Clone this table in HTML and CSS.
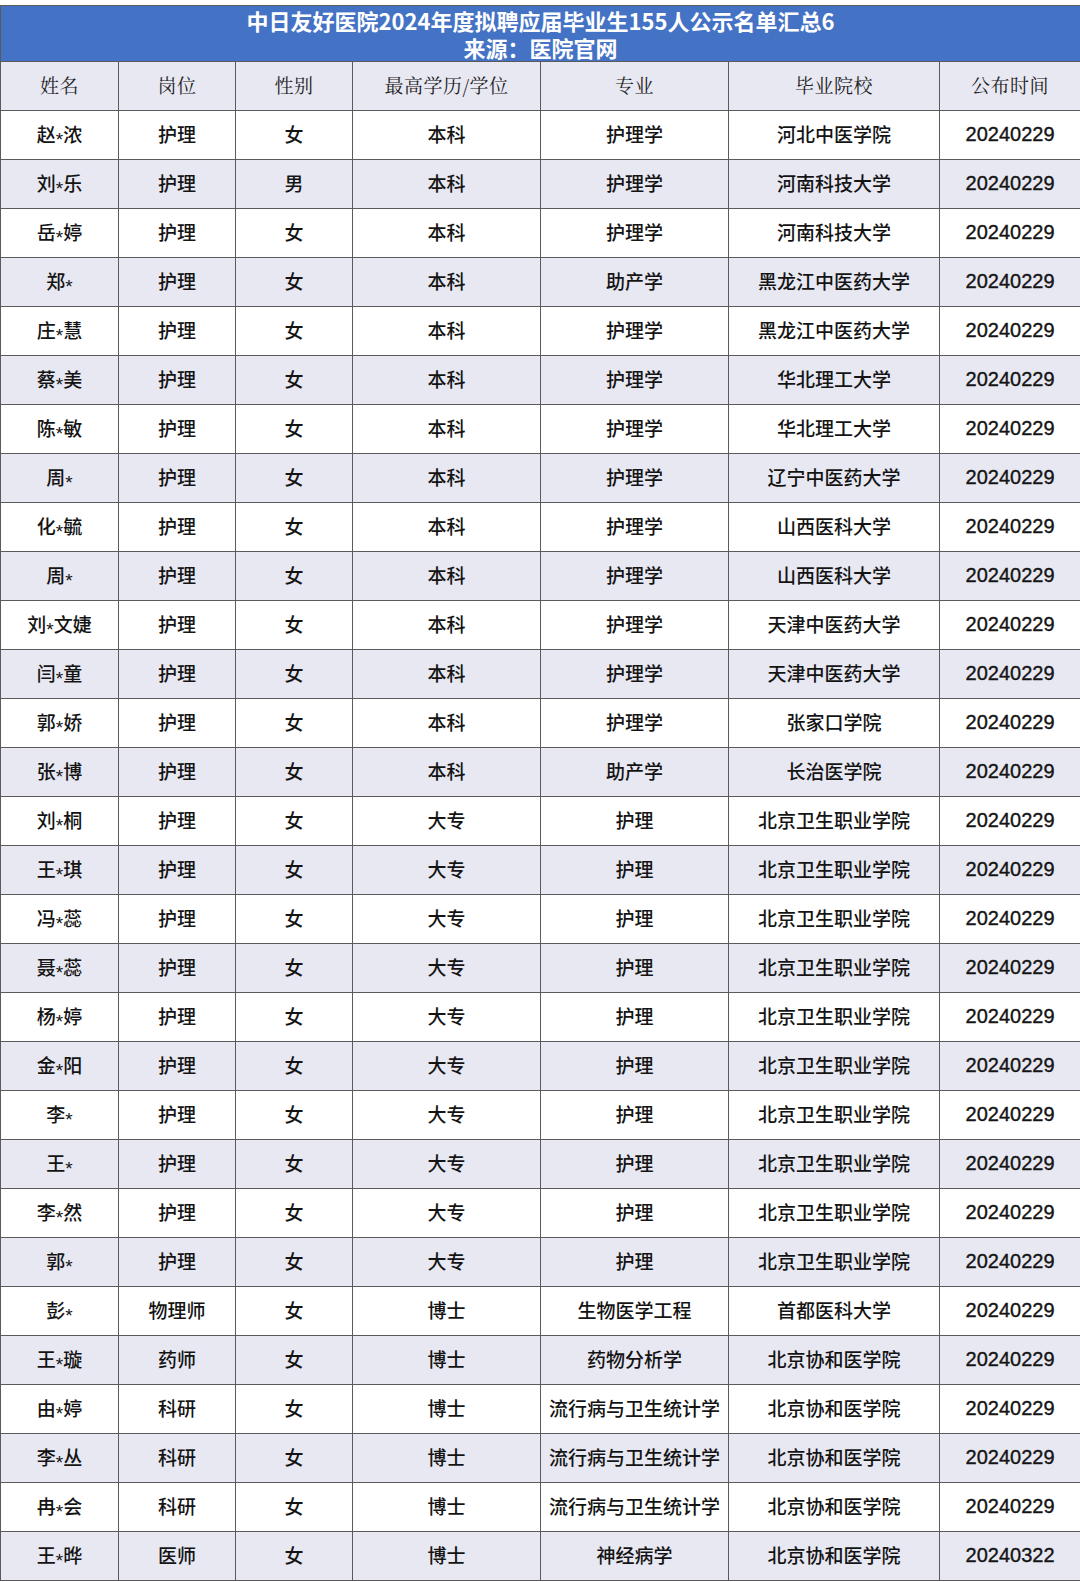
FILE: index.html
```html
<!DOCTYPE html>
<html lang="zh-CN">
<head>
<meta charset="utf-8">
<title>中日友好医院2024年度拟聘应届毕业生公示名单</title>
<link rel="stylesheet" href="styles.css">
</head>
<body>
<table class="list">
<colgroup>
<col class="c-name"><col class="c-post"><col class="c-sex"><col class="c-edu"><col class="c-major"><col class="c-school"><col class="c-date">
</colgroup>
<thead>
<tr class="title-row"><th colspan="7" class="title"><div class="title-line">中日友好医院2024年度拟聘应届毕业生155人公示名单汇总6</div><div class="title-line">来源：医院官网</div></th></tr>
<tr class="head-row"><th>姓名</th><th>岗位</th><th>性别</th><th>最高学历/学位</th><th>专业</th><th>毕业院校</th><th>公布时间</th></tr>
</thead>
<tbody>
<tr><td>赵<i>*</i>浓</td><td>护理</td><td>女</td><td>本科</td><td>护理学</td><td>河北中医学院</td><td class="date">20240229</td></tr>
<tr><td>刘<i>*</i>乐</td><td>护理</td><td>男</td><td>本科</td><td>护理学</td><td>河南科技大学</td><td class="date">20240229</td></tr>
<tr><td>岳<i>*</i>婷</td><td>护理</td><td>女</td><td>本科</td><td>护理学</td><td>河南科技大学</td><td class="date">20240229</td></tr>
<tr><td>郑<i>*</i></td><td>护理</td><td>女</td><td>本科</td><td>助产学</td><td>黑龙江中医药大学</td><td class="date">20240229</td></tr>
<tr><td>庄<i>*</i>慧</td><td>护理</td><td>女</td><td>本科</td><td>护理学</td><td>黑龙江中医药大学</td><td class="date">20240229</td></tr>
<tr><td>蔡<i>*</i>美</td><td>护理</td><td>女</td><td>本科</td><td>护理学</td><td>华北理工大学</td><td class="date">20240229</td></tr>
<tr><td>陈<i>*</i>敏</td><td>护理</td><td>女</td><td>本科</td><td>护理学</td><td>华北理工大学</td><td class="date">20240229</td></tr>
<tr><td>周<i>*</i></td><td>护理</td><td>女</td><td>本科</td><td>护理学</td><td>辽宁中医药大学</td><td class="date">20240229</td></tr>
<tr><td>化<i>*</i>毓</td><td>护理</td><td>女</td><td>本科</td><td>护理学</td><td>山西医科大学</td><td class="date">20240229</td></tr>
<tr><td>周<i>*</i></td><td>护理</td><td>女</td><td>本科</td><td>护理学</td><td>山西医科大学</td><td class="date">20240229</td></tr>
<tr><td>刘<i>*</i>文婕</td><td>护理</td><td>女</td><td>本科</td><td>护理学</td><td>天津中医药大学</td><td class="date">20240229</td></tr>
<tr><td>闫<i>*</i>童</td><td>护理</td><td>女</td><td>本科</td><td>护理学</td><td>天津中医药大学</td><td class="date">20240229</td></tr>
<tr><td>郭<i>*</i>娇</td><td>护理</td><td>女</td><td>本科</td><td>护理学</td><td>张家口学院</td><td class="date">20240229</td></tr>
<tr><td>张<i>*</i>博</td><td>护理</td><td>女</td><td>本科</td><td>助产学</td><td>长治医学院</td><td class="date">20240229</td></tr>
<tr><td>刘<i>*</i>桐</td><td>护理</td><td>女</td><td>大专</td><td>护理</td><td>北京卫生职业学院</td><td class="date">20240229</td></tr>
<tr><td>王<i>*</i>琪</td><td>护理</td><td>女</td><td>大专</td><td>护理</td><td>北京卫生职业学院</td><td class="date">20240229</td></tr>
<tr><td>冯<i>*</i>蕊</td><td>护理</td><td>女</td><td>大专</td><td>护理</td><td>北京卫生职业学院</td><td class="date">20240229</td></tr>
<tr><td>聂<i>*</i>蕊</td><td>护理</td><td>女</td><td>大专</td><td>护理</td><td>北京卫生职业学院</td><td class="date">20240229</td></tr>
<tr><td>杨<i>*</i>婷</td><td>护理</td><td>女</td><td>大专</td><td>护理</td><td>北京卫生职业学院</td><td class="date">20240229</td></tr>
<tr><td>金<i>*</i>阳</td><td>护理</td><td>女</td><td>大专</td><td>护理</td><td>北京卫生职业学院</td><td class="date">20240229</td></tr>
<tr><td>李<i>*</i></td><td>护理</td><td>女</td><td>大专</td><td>护理</td><td>北京卫生职业学院</td><td class="date">20240229</td></tr>
<tr><td>王<i>*</i></td><td>护理</td><td>女</td><td>大专</td><td>护理</td><td>北京卫生职业学院</td><td class="date">20240229</td></tr>
<tr><td>李<i>*</i>然</td><td>护理</td><td>女</td><td>大专</td><td>护理</td><td>北京卫生职业学院</td><td class="date">20240229</td></tr>
<tr><td>郭<i>*</i></td><td>护理</td><td>女</td><td>大专</td><td>护理</td><td>北京卫生职业学院</td><td class="date">20240229</td></tr>
<tr><td>彭<i>*</i></td><td>物理师</td><td>女</td><td>博士</td><td>生物医学工程</td><td>首都医科大学</td><td class="date">20240229</td></tr>
<tr><td>王<i>*</i>璇</td><td>药师</td><td>女</td><td>博士</td><td>药物分析学</td><td>北京协和医学院</td><td class="date">20240229</td></tr>
<tr><td>由<i>*</i>婷</td><td>科研</td><td>女</td><td>博士</td><td>流行病与卫生统计学</td><td>北京协和医学院</td><td class="date">20240229</td></tr>
<tr><td>李<i>*</i>丛</td><td>科研</td><td>女</td><td>博士</td><td>流行病与卫生统计学</td><td>北京协和医学院</td><td class="date">20240229</td></tr>
<tr><td>冉<i>*</i>会</td><td>科研</td><td>女</td><td>博士</td><td>流行病与卫生统计学</td><td>北京协和医学院</td><td class="date">20240229</td></tr>
<tr><td>王<i>*</i>晔</td><td>医师</td><td>女</td><td>博士</td><td>神经病学</td><td>北京协和医学院</td><td class="date">20240322</td></tr>
</tbody>
</table>
</body>
</html>
```
FILE: styles.css
```css
html, body {
  margin: 0;
  padding: 0;
  background: #ffffff;
}
body {
  padding-top: 5px;
  font-family: "Noto Sans CJK SC", sans-serif;
  color: #1a1a1a;
}
.list {
  width: 1080px;
  border-collapse: collapse;
  table-layout: fixed;
}
.c-name { width: 118px; }
.c-post { width: 117px; }
.c-sex { width: 117px; }
.c-edu { width: 188px; }
.c-major { width: 188px; }
.c-school { width: 211px; }
.c-date { width: 141px; }

.list th, .list td {
  border: 1px solid #5a5a5e;
  padding: 0 0 3px 0;
  text-align: center;
  vertical-align: middle;
  white-space: nowrap;
  overflow: hidden;
}
.title-row { height: 56px; }
.list .title {
  background: #4472c4;
  color: #ffffff;
  font-family: "Noto Sans CJK SC", sans-serif;
  font-weight: 700;
  font-size: 22px;
  padding: 0;
  overflow: visible;
}
.title-line {
  height: 27px;
  line-height: 27px;
}
.head-row { height: 49px; background: #e8e8f2; }
.head-row th {
  font-family: "Noto Serif CJK SC", "AR PL UMing CN", "Noto Sans CJK SC", serif;
  font-weight: 400;
  font-size: 19px;
  color: #222;
  letter-spacing: 0.5px;
}
tbody tr { height: 49px; }
tbody tr:nth-child(even) { background: #e8e8f2; }
tbody td {
  font-size: 19px;
  font-weight: 500;
  color: #141414;
}
tbody td i {
  font-style: normal;
  font-family: "Liberation Sans", sans-serif;
  font-size: 19px;
  font-weight: 400;
  position: relative;
  top: 4px;
}
.list td.date {
  font-family: "Liberation Sans", sans-serif;
  font-size: 20px;
  font-weight: 400;
  -webkit-text-stroke: 0.35px #141414;
  padding-bottom: 1px;
}
```
